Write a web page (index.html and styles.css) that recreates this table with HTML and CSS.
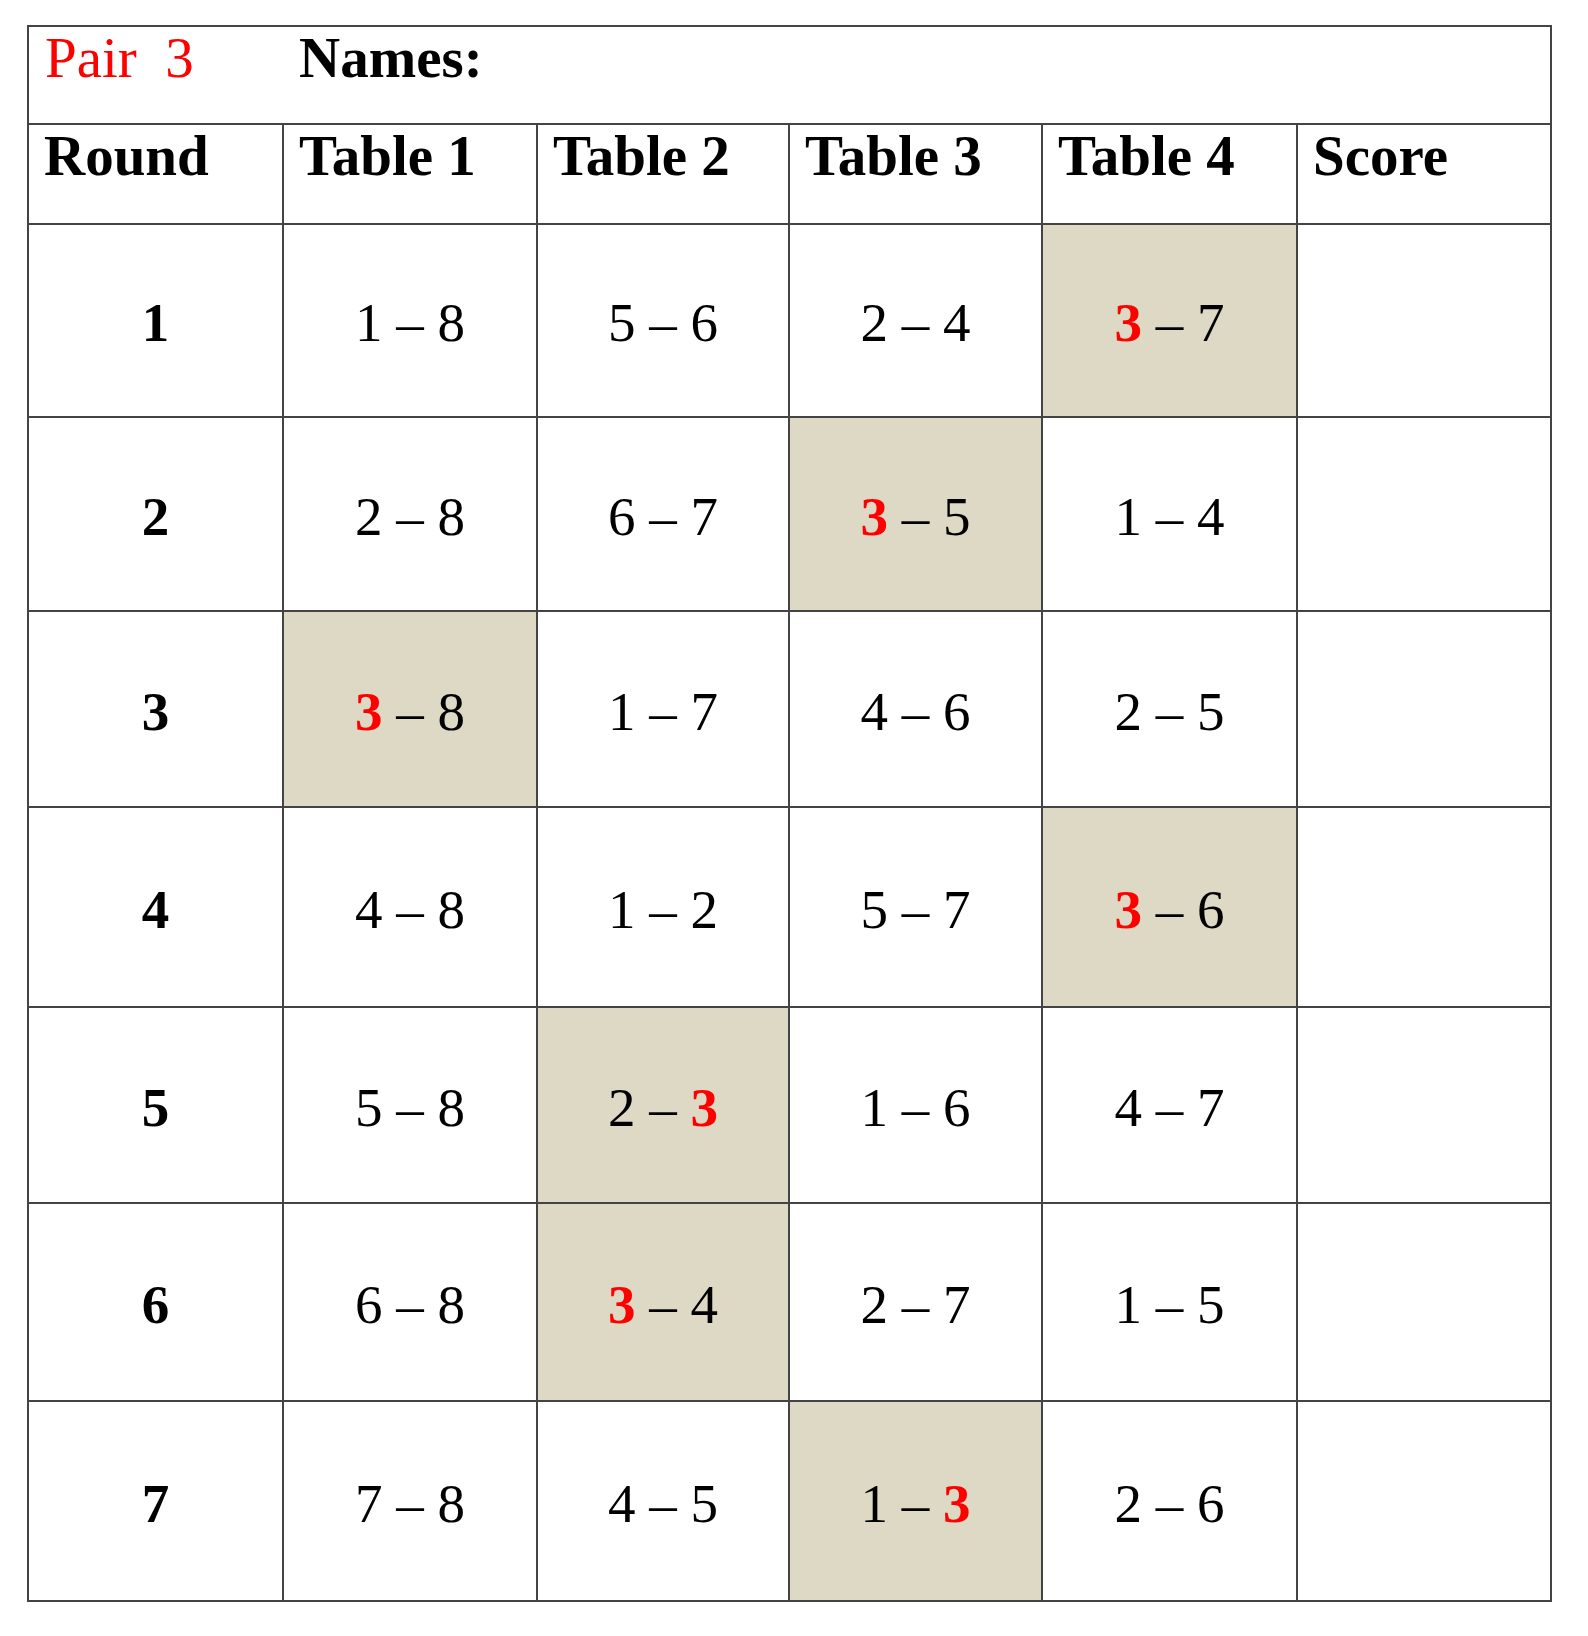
FILE: index.html
```html
<!DOCTYPE html>
<html lang="en">
<head>
<meta charset="utf-8">
<title>Pair 3 movement card</title>
<link rel="stylesheet" href="styles.css">
</head>
<body>
<div class="card">
  <div class="pair">Pair&nbsp; 3</div>
  <div class="names">Names:</div>

  <div class="head">Round</div>
  <div class="head">Table 1</div>
  <div class="head">Table 2</div>
  <div class="head">Table 3</div>
  <div class="head">Table 4</div>
  <div class="head">Score</div>

  <div class="rnd">1</div>
  <div class="cell">1 – 8</div>
  <div class="cell">5 – 6</div>
  <div class="cell">2 – 4</div>
  <div class="cell shade"><span class="me">3</span>&nbsp;– 7</div>
  <div class="cell"></div>

  <div class="rnd">2</div>
  <div class="cell">2 – 8</div>
  <div class="cell">6 – 7</div>
  <div class="cell shade"><span class="me">3</span>&nbsp;– 5</div>
  <div class="cell">1 – 4</div>
  <div class="cell"></div>

  <div class="rnd">3</div>
  <div class="cell shade"><span class="me">3</span>&nbsp;– 8</div>
  <div class="cell">1 – 7</div>
  <div class="cell">4 – 6</div>
  <div class="cell">2 – 5</div>
  <div class="cell"></div>

  <div class="rnd">4</div>
  <div class="cell">4 – 8</div>
  <div class="cell">1 – 2</div>
  <div class="cell">5 – 7</div>
  <div class="cell shade"><span class="me">3</span>&nbsp;– 6</div>
  <div class="cell"></div>

  <div class="rnd">5</div>
  <div class="cell">5 – 8</div>
  <div class="cell shade">2 –&nbsp;<span class="me">3</span></div>
  <div class="cell">1 – 6</div>
  <div class="cell">4 – 7</div>
  <div class="cell"></div>

  <div class="rnd">6</div>
  <div class="cell">6 – 8</div>
  <div class="cell shade"><span class="me">3</span>&nbsp;– 4</div>
  <div class="cell">2 – 7</div>
  <div class="cell">1 – 5</div>
  <div class="cell"></div>

  <div class="rnd">7</div>
  <div class="cell">7 – 8</div>
  <div class="cell">4 – 5</div>
  <div class="cell shade">1 –&nbsp;<span class="me">3</span></div>
  <div class="cell">2 – 6</div>
  <div class="cell"></div>
</div>
</body>
</html>
```
FILE: styles.css
```css
html, body {
  margin: 0;
  padding: 0;
  background: #ffffff;
}

body {
  font-family: "Liberation Serif", "Times New Roman", serif;
  color: #000000;
}

.card {
  margin: 25px 0 0 27px;
  width: max-content;
  display: grid;
  grid-template-columns: 255px 254px 252px 253px 255px 254px;
  grid-template-rows: 98px 100px 193px 194px 196px 200px 196px 198px 200px;
  border-top: 2px solid #444444;
  border-left: 2px solid #444444;
}

.card > div {
  box-sizing: border-box;
  border-right: 2px solid #444444;
  border-bottom: 2px solid #444444;
}

.pair {
  grid-column: 1;
  border-right: none !important;
  color: #ff0000;
  font-size: 57px;
  line-height: 57px;
  padding: 2px 0 0 16px;
}

.names {
  grid-column: 2 / 7;
  font-size: 57px;
  line-height: 57px;
  font-weight: bold;
  padding: 2px 0 0 15px;
}

.head {
  font-size: 57px;
  line-height: 57px;
  font-weight: bold;
  padding: 2px 0 0 15px;
}

.rnd,
.cell {
  display: flex;
  align-items: center;
  justify-content: center;
  font-size: 55px;
  line-height: 55px;
  padding-top: 4px;
}

.rnd {
  font-weight: bold;
}

.shade {
  background: #ddd9c4;
}

.me {
  color: #ff0000;
  font-weight: bold;
}
```
